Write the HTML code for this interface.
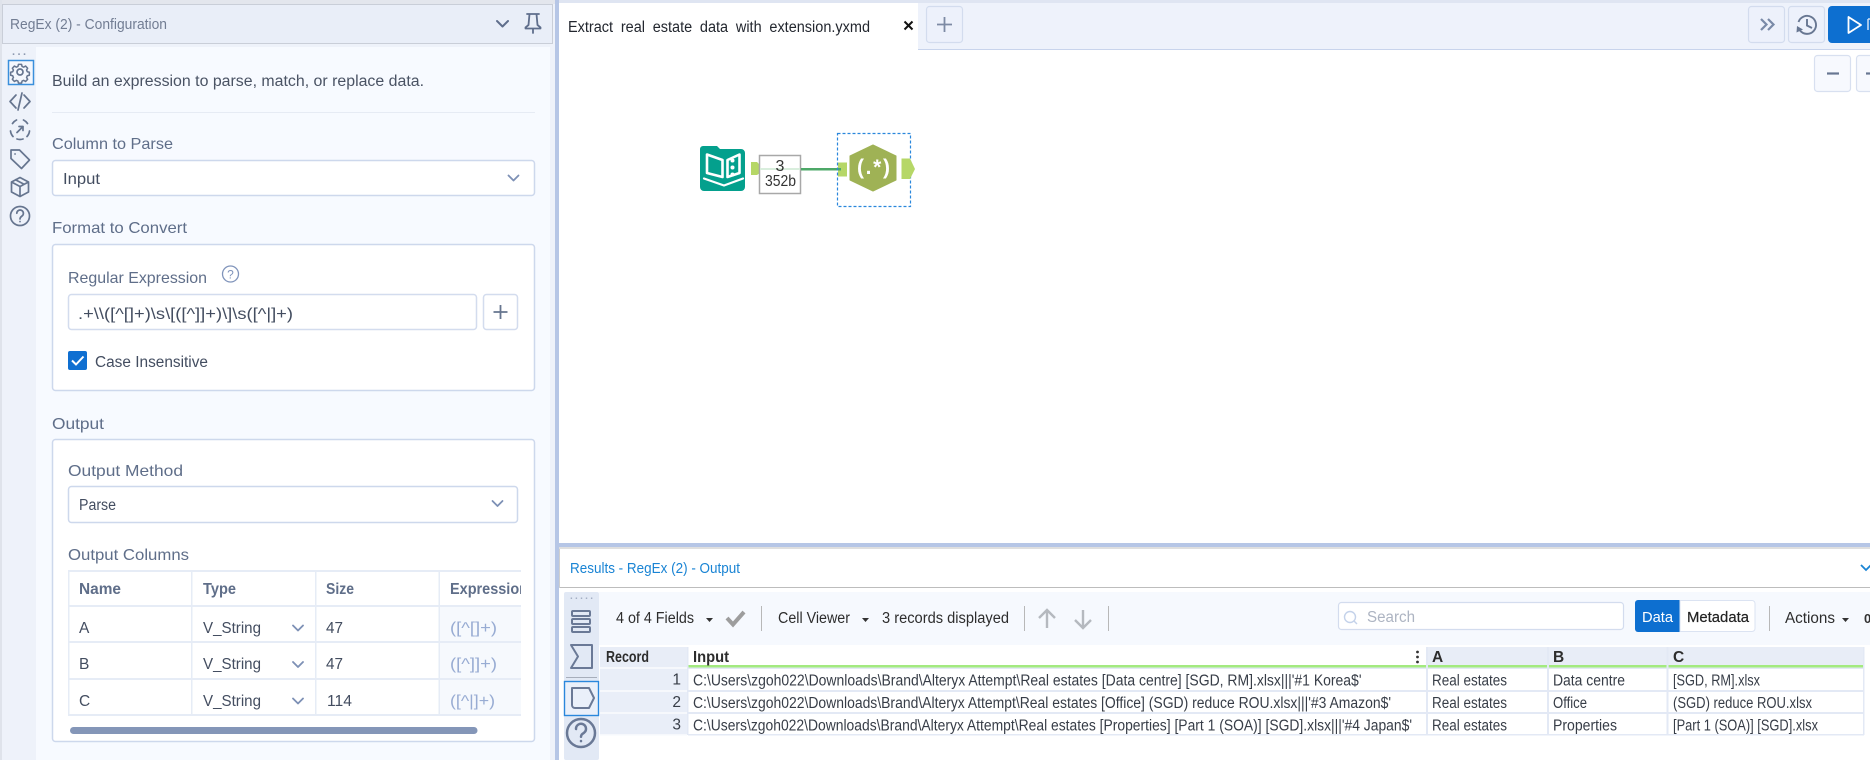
<!DOCTYPE html>
<html lang="en"><head><meta charset="utf-8"><title>RegEx Configuration</title>
<style>
html,body{margin:0;padding:0;background:#fff;width:1870px;height:760px;overflow:hidden}
svg{display:block}
#root{filter:blur(.3px)}
text{font-family:"Liberation Sans",sans-serif;white-space:pre}
.l{font-size:16px;fill:#5f6e89}
.d{font-size:15.500px;fill:#434d60}
.h{font-size:15.500px;fill:#5f6e89;font-weight:bold}
.e{font-size:15.500px;fill:#98acd3}
.t{font-size:15.500px;fill:#2d2d2d}
.c{font-size:15.500px;fill:#373d47}
.b{font-size:15.500px;fill:#2d2d2d;font-weight:bold}
.ic{fill:none;stroke:#66758f;stroke-width:2;stroke-linecap:round;stroke-linejoin:round}
.ch{fill:none;stroke:#7d90b5;stroke-width:1.800;stroke-linecap:round;stroke-linejoin:round}
</style></head><body>
<svg id="root" width="1870" height="760" viewBox="0 0 1870 760" xmlns="http://www.w3.org/2000/svg">
<rect width="1870" height="760" fill="#fff"/>

<!-- LEFT PANEL -->
<rect x="0" y="0" width="555" height="760" fill="#eef2fa"/>
<rect x="0" y="0" width="555" height="4" fill="#e3e6ed"/>
<rect x="0" y="0" width="2" height="760" fill="#dfe3eb"/>
<rect x="2.500" y="4.500" width="550" height="39" fill="#e9eef8" stroke="#c9ced8"/>
<text x="10" y="29" font-size="15" fill="#727d93" textLength="157" lengthAdjust="spacingAndGlyphs">RegEx (2) - Configuration</text>
<path class="ch" d="M497 21l5.500 5.500 5.500-5.500" style="stroke:#5f6e8c;stroke-width:2"/>
<path class="ic" style="stroke:#5f6e8c;stroke-width:1.800" d="M527 14h12M529.500 14l-1 11-3 2.500v1h15v-1l-3-2.500-1-11M533 29v4"/>
<rect x="36" y="47" width="514" height="713" fill="#f7faff"/>

<!-- rail icons -->
<text x="12" y="55" font-size="11" fill="#8d99b0" textLength="14" lengthAdjust="spacing" font-weight="bold">...</text>
<rect x="8.500" y="60.500" width="25" height="24" fill="#f4f7fd" stroke="#3a8fdc" stroke-width="1.500"/>
<g class="ic" style="stroke-width:1.700">
<circle cx="20" cy="72" r="3"/>
<path d="M18.300 63.500h3.400l.6 2.300 1.800.8 2.100-1.200 2.300 2.400-1.200 2 .8 1.900 2.300.6v3.300l-2.300.6-.8 1.900 1.200 2-2.300 2.400-2.100-1.200-1.800.8-.6 2.300h-3.400l-.6-2.300-1.800-.8-2.100 1.200-2.300-2.400 1.200-2-.8-1.900-2.300-.6v-3.300l2.300-.6.8-1.900-1.200-2 2.300-2.400 2.100 1.200 1.800-.8z" transform="translate(2 7.200) scale(.9)"/>
<path d="M16 95l-6 6.500 6 6.500M24 95l6 6.500-6 6.500M22 93l-4 17"/>
<path d="M12.500 123.500a10 10 0 0 1 4-3.500M23.500 120a10 10 0 0 1 4 3.500M29.500 131a10 10 0 0 1-2.500 5.500M23 139a10 10 0 0 1-6 0M13 136.500a10 10 0 0 1-2.500-5.500"/>
<path d="M17 132.500l6-6M19 126.500h4v4"/>
<path d="M11 150v8.500l10.500 10 8-8.500-10-10zM15 154h.1"/>
<path d="M20 177.500l8.500 4.500v10l-8.500 4.500-8.500-4.500v-10zM11.500 182l8.500 4.500 8.500-4.500M20 186.500v10M15.500 179.800l8.500 4.500"/>
<circle cx="20" cy="216" r="9.500"/>
<path d="M16.800 213.300a3.300 3.300 0 1 1 5.200 2.700c-1.300.9-2 1.500-2 3M20 221.500v.1"/>
</g>

<text x="52" y="86" font-size="15.500" fill="#4a5364" textLength="372" lengthAdjust="spacingAndGlyphs">Build an expression to parse, match, or replace data.</text>
<rect x="52" y="112" width="483" height="1" fill="#e6ebf4"/>

<text x="52" y="149" class="l" textLength="121" lengthAdjust="spacingAndGlyphs">Column to Parse</text>
<rect x="52.500" y="160.500" width="482" height="35" rx="3" fill="#fff" stroke="#cdd8ec" stroke-width="1.500"/>
<text x="63" y="184" class="d" textLength="37" lengthAdjust="spacingAndGlyphs">Input</text>
<path class="ch" d="M508.500 175.500l5 5 5-5"/>

<text x="52" y="233" class="l" textLength="135" lengthAdjust="spacingAndGlyphs">Format to Convert</text>
<rect x="52.500" y="244.500" width="482" height="146" rx="3" fill="#fff" stroke="#cdd8ec" stroke-width="1.500"/>
<text x="68" y="283" class="l" textLength="139" lengthAdjust="spacingAndGlyphs">Regular Expression</text>
<circle cx="230.500" cy="274" r="8" fill="none" stroke="#8094bb" stroke-width="1.300"/>
<text x="230.500" y="278.500" font-size="12" fill="#8094bb" text-anchor="middle">?</text>
<rect x="68.500" y="294.500" width="408" height="35" rx="3" fill="#fff" stroke="#d3dcee" stroke-width="1.500"/>
<text x="78" y="319" class="d" textLength="215" lengthAdjust="spacingAndGlyphs">.+\\([^[]+)\s\[([^]]+)\]\s([^|]+)</text>
<rect x="483.500" y="294.500" width="34" height="35" rx="3" fill="#fff" stroke="#d3dcee" stroke-width="1.500"/>
<path d="M500.500 305v14M493.500 312h14" stroke="#66758f" stroke-width="1.800" fill="none"/>
<rect x="68" y="351" width="19" height="19" rx="2" fill="#0f6fd1"/>
<path d="M72 360.500l4 4 7.500-8" fill="none" stroke="#fff" stroke-width="2"/>
<text x="95" y="367" class="d" textLength="113" lengthAdjust="spacingAndGlyphs">Case Insensitive</text>

<text x="52" y="429" class="l" textLength="52" lengthAdjust="spacingAndGlyphs">Output</text>
<rect x="52.500" y="439.500" width="482" height="302" rx="3" fill="#fff" stroke="#cdd8ec" stroke-width="1.500"/>
<text x="68" y="476" class="l" textLength="115" lengthAdjust="spacingAndGlyphs">Output Method</text>
<rect x="68.500" y="486.500" width="449" height="36" rx="3" fill="#fff" stroke="#cdd8ec" stroke-width="1.500"/>
<text x="79" y="510" class="d" textLength="37" lengthAdjust="spacingAndGlyphs">Parse</text>
<path class="ch" d="M492.500 501l5 5 5-5"/>
<text x="68" y="560" class="l" textLength="121" lengthAdjust="spacingAndGlyphs">Output Columns</text>

<!-- output table -->
<rect x="439" y="606" width="82" height="109" fill="#f6f9fd"/>
<g fill="#e6ecf6">
<rect x="68" y="570" width="453" height="2"/><rect x="68" y="605" width="453" height="2"/>
<rect x="68" y="641" width="453" height="2"/><rect x="68" y="678" width="453" height="2"/><rect x="68" y="714" width="453" height="2"/>
<rect x="68" y="570" width="1.500" height="146"/><rect x="191" y="570" width="1.500" height="146"/><rect x="315" y="570" width="1.500" height="146"/><rect x="438.500" y="570" width="1.500" height="146"/>
</g>
<text x="79" y="594" class="h" textLength="42" lengthAdjust="spacingAndGlyphs">Name</text>
<text x="203" y="594" class="h" textLength="33" lengthAdjust="spacingAndGlyphs">Type</text>
<text x="326" y="594" class="h" textLength="28" lengthAdjust="spacingAndGlyphs">Size</text>
<svg x="450" y="575" width="71" height="30"><text x="0" y="19" class="h" textLength="78" lengthAdjust="spacingAndGlyphs">Expression</text></svg>
<g>
<text x="79" y="633" class="d">A</text><text x="79" y="669" class="d">B</text><text x="79" y="706" class="d">C</text>
<text x="203" y="633" class="d" textLength="58" lengthAdjust="spacingAndGlyphs">V_String</text>
<text x="203" y="669" class="d" textLength="58" lengthAdjust="spacingAndGlyphs">V_String</text>
<text x="203" y="706" class="d" textLength="58" lengthAdjust="spacingAndGlyphs">V_String</text>
<path class="ch" d="M293 625.500l5 5 5-5M293 662l5 5 5-5M293 698.500l5 5 5-5"/>
<text x="326" y="633" class="d" textLength="17" lengthAdjust="spacingAndGlyphs">47</text>
<text x="326" y="669" class="d" textLength="17" lengthAdjust="spacingAndGlyphs">47</text>
<text x="327" y="706" class="d" textLength="25" lengthAdjust="spacingAndGlyphs">114</text>
<text x="450" y="633" class="e" textLength="47" lengthAdjust="spacingAndGlyphs">([^[]+)</text>
<text x="450" y="669" class="e" textLength="47" lengthAdjust="spacingAndGlyphs">([^]]+)</text>
<text x="450" y="706" class="e" textLength="45" lengthAdjust="spacingAndGlyphs">([^|]+)</text>
</g>
<rect x="70" y="727" width="407.500" height="7" rx="3.500" fill="#8496b8"/>

<!-- separator -->
<rect x="550" y="47" width="5" height="713" fill="#eef2fa"/>
<rect x="555" y="0" width="4" height="760" fill="#b6c6e6"/>

<!-- TAB BAR -->
<rect x="559" y="0" width="1311" height="3" fill="#dfe5f2"/>
<rect x="559" y="3" width="1311" height="46" fill="#eef2fb"/>
<rect x="559" y="49" width="1311" height="1" fill="#c8d4ec"/>
<rect x="559" y="3" width="359" height="47" fill="#fff"/>
<text x="568" y="32" font-size="15.500" fill="#23272f" textLength="302" lengthAdjust="spacingAndGlyphs" word-spacing="4">Extract real estate data with extension.yxmd</text>
<path d="M904.500 21.500l8 8M912.500 21.500l-8 8" stroke="#111" stroke-width="2" fill="none"/>
<rect x="926.500" y="6.500" width="36" height="36" rx="3" fill="#edf1fb" stroke="#d3dcee" stroke-width="1.200"/>
<path d="M944.500 17v15M937 24.500h15" stroke="#7d8aa4" stroke-width="1.800" fill="none"/>
<rect x="1748.500" y="6.500" width="36" height="36" rx="3" fill="#edf1fb" stroke="#d3dcee" stroke-width="1.200"/>
<path d="M1761 19l5.500 5.500-5.500 5.500M1768 19l5.500 5.500-5.500 5.500" stroke="#7a8aa8" stroke-width="2.200" fill="none"/>
<rect x="1788.500" y="6.500" width="36" height="36" rx="3" fill="#edf1fb" stroke="#d3dcee" stroke-width="1.200"/>
<path d="M1800 30.500a9 9 0 1 0-1.500-8.500M1807 19v6.500l5 2.500" stroke="#687792" stroke-width="1.900" fill="none"/>
<path d="M1797 26l6 3.500-6.500 3z" fill="#687792"/>
<path d="M1870 6h-38a4 4 0 0 0-4 4v29a4 4 0 0 0 4 4h38z" fill="#0d6fd0"/>
<path d="M1848.500 17v16l12.500-8z" fill="none" stroke="#fff" stroke-width="1.800" stroke-linejoin="round"/>
<path d="M1868 19v11M1868 19h2" stroke="#cfe0f6" stroke-width="1.500" fill="none"/>

<!-- canvas buttons -->
<rect x="1814.500" y="55.500" width="36" height="36" rx="3" fill="#f7f9fe" stroke="#d8e0f0" stroke-width="1.200"/>
<path d="M1827 73.500h12" stroke="#687792" stroke-width="2.200"/>
<rect x="1856.500" y="55.500" width="36" height="36" rx="3" fill="#f7f9fe" stroke="#d8e0f0" stroke-width="1.200"/>
<path d="M1866 73.500h6" stroke="#687792" stroke-width="2.200"/>

<!-- WORKFLOW -->
<path d="M703 146h14l3 3h21a4 4 0 0 1 4 4v34a4 4 0 0 1-4 4h-37a4 4 0 0 1-4-4v-38a3 3 0 0 1 3-3z" fill="#04a08d"/>
<g fill="none" stroke="#fff" stroke-width="2.600" stroke-linejoin="round" stroke-linecap="round">
<path d="M707 154.500l15.500 5.500v17l-15.500-4z"/>
<path d="M739.500 154.500l-12 5.500v17l12-4z"/>
<path d="M704 178.500l20 7 19-7" stroke-width="2.200"/>
</g>
<circle cx="732.500" cy="160.500" r="2" fill="#fff"/><circle cx="732.500" cy="167.500" r="2" fill="#fff"/><circle cx="732.500" cy="174.500" r="2" fill="#fff"/>
<path d="M751 162h6l3 3v8l-3 2h-6z" fill="#b6d767"/>
<rect x="759.500" y="155.500" width="41" height="38" fill="#fff" stroke="#a8a8a8" stroke-width="1.500"/>
<rect x="760" y="168" width="40" height="2" fill="#d9eedd"/>
<text x="780" y="171" font-size="16" fill="#333" text-anchor="middle">3</text>
<text x="765" y="186" font-size="16" fill="#333" textLength="31" lengthAdjust="spacingAndGlyphs">352b</text>
<rect x="838" y="162.500" width="9" height="14" fill="#b6d767"/>
<rect x="801" y="168" width="40" height="2.500" fill="#4da868"/>
<rect x="837.500" y="133.500" width="73" height="73" fill="none" stroke="#2a87dc" stroke-width="1.200" stroke-dasharray="3 2"/>
<path d="M873 145l23 11v24l-23 11-23-11v-24z" fill="#9fb255" stroke="#9fb255" stroke-width="1" stroke-linejoin="round"/>
<text x="857" y="174" font-size="21" font-weight="bold" fill="#fff" textLength="33" lengthAdjust="spacing">(.*)</text>
<path d="M901.500 158.500h8.500l5 10.500-5 10h-8.500z" fill="#b6d767"/>

<!-- RESULTS -->
<rect x="559" y="543" width="1311" height="4" fill="#b6c6e6"/>
<rect x="559" y="547" width="1311" height="2" fill="#dfdfdf"/>
<rect x="560" y="549" width="1310" height="38" fill="#fff"/>
<rect x="560" y="587" width="1310" height="1" fill="#bdbdbd"/>
<rect x="559" y="549" width="1" height="39" fill="#cfcfcf"/>
<text x="570" y="573" font-size="14.500" fill="#1a84d4" textLength="170" lengthAdjust="spacingAndGlyphs">Results - RegEx (2) - Output</text>
<path d="M1861 565l5 5 5-5" fill="none" stroke="#1a84d4" stroke-width="1.800"/>

<rect x="564" y="592" width="35" height="168" rx="2" fill="#e2e9f5"/>
<text x="570" y="599" font-size="10" font-weight="bold" fill="#a4afc4" textLength="23" lengthAdjust="spacing">.....</text>
<g class="ic" style="stroke:#6a7996;stroke-width:2">
<rect x="572" y="611" width="18" height="5" rx="1"/><rect x="572" y="619" width="18" height="5" rx="1"/><rect x="572" y="627" width="18" height="5" rx="1"/>
<path d="M571 645h21v23h-21l7-11.500z"/>
</g>
<rect x="566" y="677" width="31" height="1" fill="#a7aebb"/>
<rect x="564.500" y="681.500" width="34" height="34" fill="#eaf0fa" stroke="#2a87dc" stroke-width="1.400"/>
<path class="ic" style="stroke:#6a7996;stroke-width:2" d="M572 688h17l5 10-5 10h-14a3 3 0 0 1-3-3z"/>
<circle cx="581" cy="733" r="14" class="ic" style="stroke:#6a7996;stroke-width:2.500"/>
<path class="ic" style="stroke:#6a7996;stroke-width:2.500" d="M576 729a5 5 0 1 1 8 3.800c-2 1.300-3 2-3 4M581 741v.1"/>

<rect x="599" y="592" width="1271" height="53" fill="#f6f9fe"/>
<text x="616" y="623" class="t" textLength="78" lengthAdjust="spacingAndGlyphs">4 of 4 Fields</text>
<path d="M706 618h7l-3.500 4z" fill="#333"/>
<path d="M727 618l6 6.500 11-12.500" fill="none" stroke="#9d9d9d" stroke-width="4"/>
<rect x="761" y="606" width="1" height="25" fill="#b8b8b8"/>
<text x="778" y="623" class="t" textLength="72" lengthAdjust="spacingAndGlyphs">Cell Viewer</text>
<path d="M862 618h7l-3.500 4z" fill="#333"/>
<text x="882" y="623" class="t" textLength="127" lengthAdjust="spacingAndGlyphs">3 records displayed</text>
<rect x="1024" y="606" width="1" height="25" fill="#b8b8b8"/>
<path d="M1047 628v-18M1039 618l8-8 8 8M1083 610v18M1075 620l8 8 8-8" fill="none" stroke="#b5b9bf" stroke-width="2.400"/>
<rect x="1108" y="606" width="1" height="25" fill="#b8b8b8"/>
<rect x="1338.500" y="602.500" width="285" height="27" rx="3" fill="#fff" stroke="#d3dcee" stroke-width="1.200"/>
<circle cx="1350" cy="617" r="5.500" fill="none" stroke="#c4d2ea" stroke-width="1.400"/>
<path d="M1354 621l3 3" stroke="#c4d2ea" stroke-width="1.400"/>
<text x="1367" y="622" font-size="15.500" fill="#adb4c2" textLength="48" lengthAdjust="spacingAndGlyphs">Search</text>
<path d="M1638 600h42v32h-42a3 3 0 0 1-3-3v-26a3 3 0 0 1 3-3z" fill="#0d6fd0"/>
<path d="M1680 600.500h72a3 3 0 0 1 3 3v25a3 3 0 0 1-3 3h-72z" fill="#fff" stroke="#dbe3f2"/>
<text x="1642" y="622" font-size="15" fill="#fff" textLength="31" lengthAdjust="spacingAndGlyphs">Data</text>
<text x="1687" y="622" font-size="15" fill="#222" textLength="62" lengthAdjust="spacingAndGlyphs" stroke="#222" stroke-width=".2">Metadata</text>
<rect x="1769" y="606" width="1" height="25" fill="#b8b8b8"/>
<text x="1785" y="623" class="t" textLength="50" lengthAdjust="spacingAndGlyphs">Actions</text>
<path d="M1842 618h7l-3.500 4z" fill="#333"/>
<text x="1864" y="623" font-size="13" font-weight="bold" fill="#333">0</text>

<!-- data grid -->
<rect x="600" y="647" width="1264" height="20" fill="#e8edf7"/>
<rect x="688" y="647" width="738" height="18" fill="#fff"/>
<rect x="688" y="665" width="1176" height="2.500" fill="#a3ea7f"/>
<rect x="600" y="669" width="88" height="65" fill="#e9eef8"/>
<g fill="#e3e9f5">
<rect x="688" y="667.500" width="1176" height="1.500"/><rect x="688" y="690" width="1176" height="2"/><rect x="688" y="712" width="1176" height="2"/><rect x="688" y="734" width="1176" height="1.500"/>
<rect x="687" y="647" width="1.500" height="88"/><rect x="1426" y="647" width="2" height="88"/><rect x="1547" y="647" width="2" height="88"/><rect x="1666.500" y="647" width="2" height="88"/><rect x="1863" y="647" width="1.500" height="88"/>
</g>
<g fill="#f6f8fc"><rect x="600" y="667" width="87" height="2"/><rect x="600" y="690" width="87" height="2"/><rect x="600" y="712" width="87" height="2"/><rect x="600" y="734" width="87" height="1.500"/></g>
<text x="606" y="662" class="b" textLength="43" lengthAdjust="spacingAndGlyphs">Record</text>
<text x="693" y="662" class="b" textLength="36" lengthAdjust="spacingAndGlyphs">Input</text>
<circle cx="1417.500" cy="652" r="1.400" fill="#333"/><circle cx="1417.500" cy="657" r="1.400" fill="#333"/><circle cx="1417.500" cy="662" r="1.400" fill="#333"/>
<text x="1432" y="662" class="b">A</text><text x="1553" y="662" class="b">B</text><text x="1673" y="662" class="b">C</text>

<text x="681" y="684.500" class="c" text-anchor="end">1</text>
<text x="681" y="707" class="c" text-anchor="end">2</text>
<text x="681" y="729.500" class="c" text-anchor="end">3</text>
<text x="693" y="685.500" class="c" textLength="668.500" lengthAdjust="spacingAndGlyphs">C:\Users\zgoh022\Downloads\Brand\Alteryx Attempt\Real estates [Data centre] [SGD, RM].xlsx|||'#1 Korea$'</text>
<text x="693" y="708" class="c" textLength="698" lengthAdjust="spacingAndGlyphs">C:\Users\zgoh022\Downloads\Brand\Alteryx Attempt\Real estates [Office] (SGD) reduce ROU.xlsx|||'#3 Amazon$'</text>
<text x="693" y="730.500" class="c" textLength="719" lengthAdjust="spacingAndGlyphs">C:\Users\zgoh022\Downloads\Brand\Alteryx Attempt\Real estates [Properties] [Part 1 (SOA)] [SGD].xlsx|||'#4 Japan$'</text>
<text x="1432" y="685.500" class="c" textLength="75" lengthAdjust="spacingAndGlyphs">Real estates</text>
<text x="1432" y="708" class="c" textLength="75" lengthAdjust="spacingAndGlyphs">Real estates</text>
<text x="1432" y="730.500" class="c" textLength="75" lengthAdjust="spacingAndGlyphs">Real estates</text>
<text x="1553" y="685.500" class="c" textLength="72" lengthAdjust="spacingAndGlyphs">Data centre</text>
<text x="1553" y="708" class="c" textLength="34" lengthAdjust="spacingAndGlyphs">Office</text>
<text x="1553" y="730.500" class="c" textLength="64" lengthAdjust="spacingAndGlyphs">Properties</text>
<text x="1673" y="685.500" class="c" textLength="87" lengthAdjust="spacingAndGlyphs">[SGD, RM].xlsx</text>
<text x="1673" y="708" class="c" textLength="139" lengthAdjust="spacingAndGlyphs">(SGD) reduce ROU.xlsx</text>
<text x="1673" y="730.500" class="c" textLength="145" lengthAdjust="spacingAndGlyphs">[Part 1 (SOA)] [SGD].xlsx</text>
</svg>
</body></html>
